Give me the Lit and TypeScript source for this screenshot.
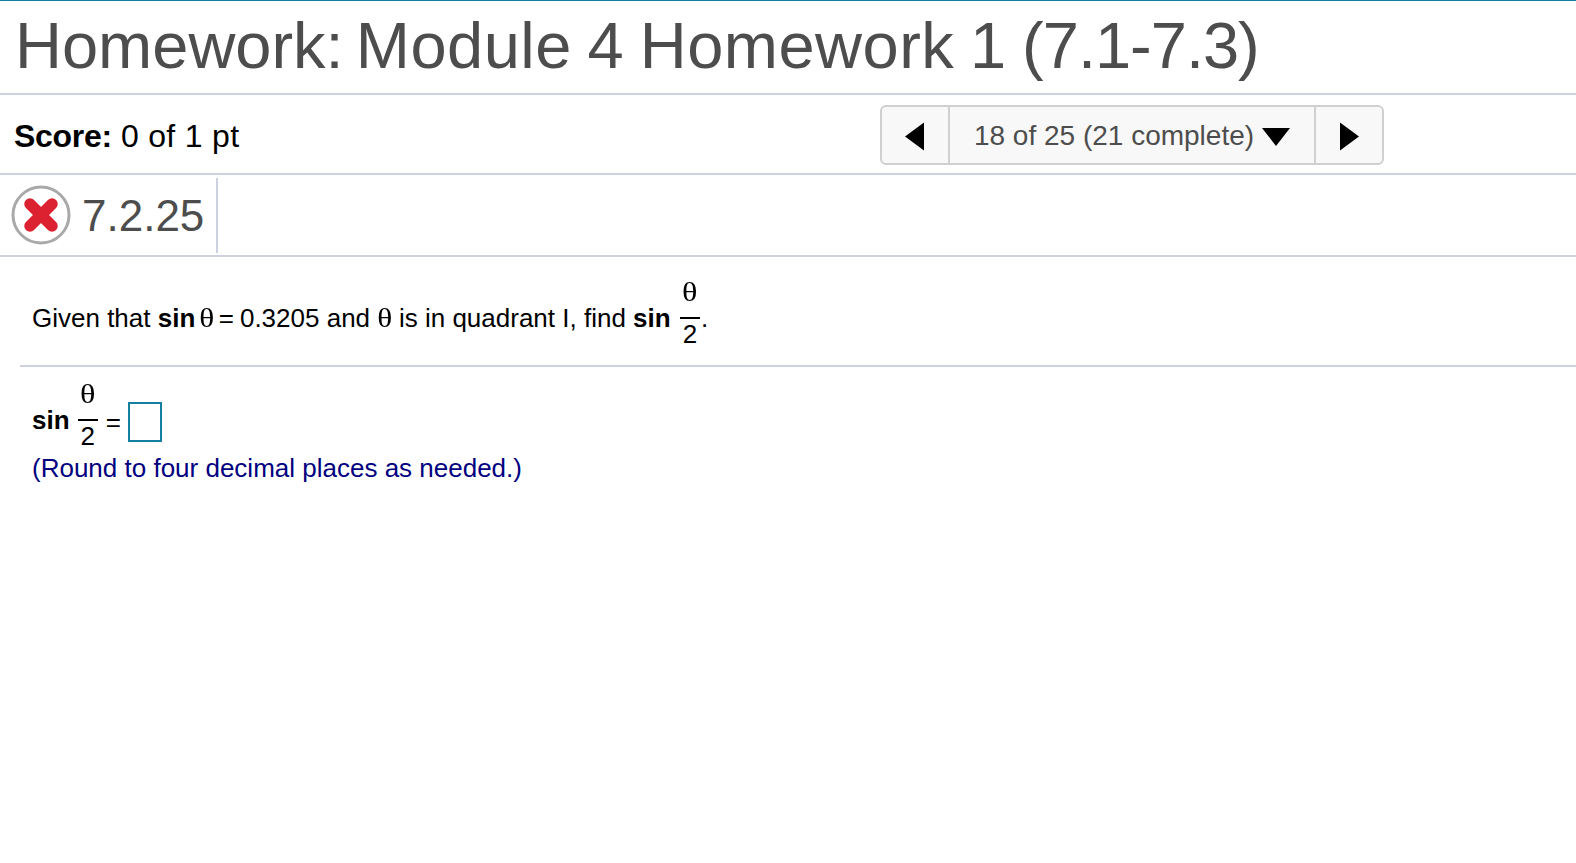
import { LitElement, html, css } from "lit";
import { customElement } from "lit/decorators.js";

@customElement("app-root")
export class AppRoot extends LitElement {
  static styles = css`
    :host { display: block; width: 1576px; height: 863px; background: #fff; font-family: "Liberation Sans", Arial, sans-serif; color: #000; overflow: hidden; border-top: 1px solid #0f7f9f; box-sizing: border-box; }
    .title { height: 92px; border-bottom: 2px solid #cdd1e0; padding-left: 15px; font-size: 65px; word-spacing: -3px; line-height: 90px; color: #4d4d4d; white-space: nowrap; }
    .t-mid { margin-left: -3px; letter-spacing: 0.5px; }
    .t-end { letter-spacing: -1px; }
    .score { height: 74px; padding-top: 4px; border-bottom: 2px solid #cdd1e0; display: flex; align-items: center; padding-left: 14px; font-size: 32px; }
    .nav { margin-left: 639px; margin-top: -2px; display: flex; height: 60px; width: 504px; box-sizing: border-box; border: 2px solid #d0d0d0; border-radius: 6px; background: #f8f8f8; align-items: stretch; }
    .score b { font-weight: 700; letter-spacing: -0.3px; }
    .score-text { width: 227px; white-space: nowrap; letter-spacing: 0.3px; }
    .navbtn { width: 66px; display: flex; align-items: center; justify-content: center; }
    .navmid { flex: 1; border-left: 2px solid #d0d0d0; border-right: 2px solid #d0d0d0; display: flex; align-items: center; justify-content: center; gap: 8px; font-size: 28px; color: #4d4d4d; white-space: nowrap; }
    .navlabel { margin-top: 2px; }
    .tri { margin-top: 3px; }
    .tri-down { margin-top: 4px; }
    .qbar { height: 80px; border-bottom: 2px solid #cdd1e0; display: flex; align-items: stretch; }
    .qid { display: flex; align-items: center; gap: 11px; padding: 0 12px 0 11px; margin-top: 3px; margin-bottom: 2px; border-right: 2px solid #cdd1e0; font-size: 44px; color: #4d4d4d; }
    .icon { margin-bottom: 2px; }
    .ring { filter: blur(0.4px); }
    .body { padding: 18px 0 0 20px; }
    .stmt { display: flex; align-items: center; height: 86px; padding: 0 0 4px 12px; font-size: 26px; white-space: pre; }
    .rule { height: 2px; background: #cdd1e0; }
    .ans { display: flex; align-items: center; padding: 24px 0 0 12px; font-size: 26px; white-space: pre; height: 82px; box-sizing: border-box; }
    .th { display: inline-block; font-family: "Liberation Serif", serif; font-size: 28px; transform: scaleX(1.12); }
    .first { margin-left: 5px; }
    .second { margin-left: 1px; }
    .eq { margin: 0 6px 0 5px; }
    .eq2 { margin: 4px 7px 0 6px; }
    .frac { display: inline-flex; flex-direction: column; align-items: center; margin: 0 1px 12px 2px; line-height: 1; }
    .ans .frac { margin: 0 2px 12px 1px; }
    .frac .n { font-family: "Liberation Serif", serif; padding-bottom: 11px; font-size: 28px; transform: scaleX(1.15); }
    .frac .d { border-top: 2px solid #000; width: 20px; text-align: center; line-height: 24px; padding-top: 3px; }
    .box { width: 34px; height: 40px; margin-top: 3px; border: 2px solid #157fa0; box-sizing: border-box; }
    .hint { padding: 4px 0 0 12px; font-size: 26px; color: #000080; }
  `;

  render() {
    return html`
      <div class="title">Homework: <span class="t-mid">Module 4 Homework 1 </span><span class="t-end">(7.1-7.3)</span></div>
      <div class="score">
        <div class="score-text"><b>Score:</b> 0 of 1 pt</div>
        <div class="nav">
          <div class="navbtn"><svg class="tri" width="20" height="29" viewBox="0 0 20 28"><path d="M19 0V28L0 14Z" fill="#000"/></svg></div>
          <div class="navmid"><span class="navlabel">18 of 25 (21 complete)</span><svg class="tri-down" width="28" height="18" viewBox="0 0 28 18"><path d="M0 0H28L14 18Z" fill="#000"/></svg></div>
          <div class="navbtn"><svg class="tri" width="20" height="29" viewBox="0 0 20 28"><path d="M1 0V28L20 14Z" fill="#000"/></svg></div>
        </div>
      </div>
      <div class="qbar">
        <div class="qid">
          <svg class="icon" width="60" height="60" viewBox="0 0 60 60"><circle class="ring" cx="30" cy="30" r="28" fill="#fff" stroke="#a9a9a9" stroke-width="3"/><path d="M19 19L41 41M41 19L19 41" stroke="#dc2130" stroke-width="11.5" stroke-linecap="round"/></svg>
          <span>7.2.25</span>
        </div>
      </div>
      <div class="body">
        <div class="stmt"><span>Given that <b>sin</b></span><span class="th first">θ</span><span class="eq">=</span><span>0.3205 and </span><span class="th second">θ</span><span> is in quadrant I, find <b>sin</b> </span><span class="frac"><span class="n">θ</span><span class="d">2</span></span><span>.</span></div>
        <div class="rule"></div>
        <div class="ans"><b>sin</b><span> </span><span class="frac"><span class="n">θ</span><span class="d">2</span></span><span class="eq2">=</span><span class="box"></span></div>
        <div class="hint">(Round to four decimal places as needed.)</div>
      </div>
    `;
  }
}
